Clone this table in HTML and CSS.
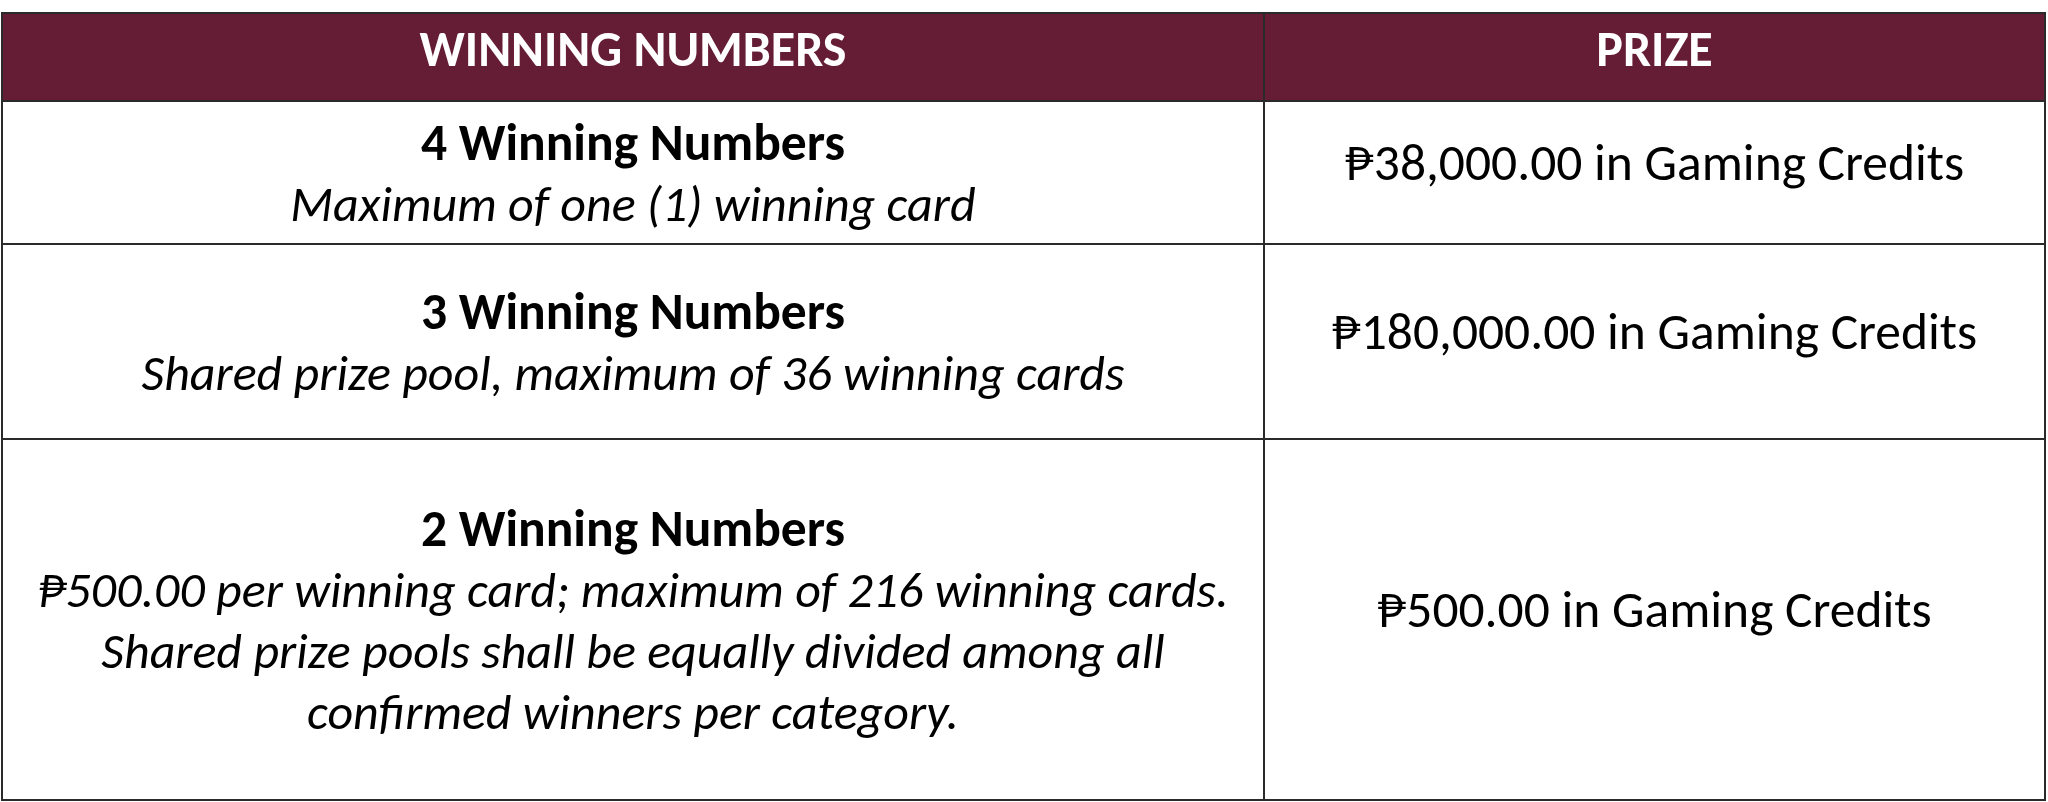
FILE: index.html
```html
<!DOCTYPE html>
<html>
<head>
<meta charset="utf-8">
<link rel="stylesheet" href="styles.css">
</head>
<body>
<table class="prize-table">
  <colgroup>
    <col class="col-numbers">
    <col class="col-prize">
  </colgroup>
  <thead>
    <tr class="head-row">
      <th>WINNING NUMBERS</th>
      <th>PRIZE</th>
    </tr>
  </thead>
  <tbody>
    <tr class="row-1">
      <td class="cat">
        <div class="cat-title">4 Winning Numbers</div>
        <div class="cat-note">Maximum of one (1) winning card</div>
      </td>
      <td class="prize">₱38,000.00 in Gaming Credits</td>
    </tr>
    <tr class="row-2">
      <td class="cat">
        <div class="cat-title">3 Winning Numbers</div>
        <div class="cat-note">Shared prize pool, maximum of 36 winning cards</div>
      </td>
      <td class="prize">₱180,000.00 in Gaming Credits</td>
    </tr>
    <tr class="row-3">
      <td class="cat">
        <div class="cat-title">2 Winning Numbers</div>
        <div class="cat-note">₱500.00 per winning card; maximum of 216 winning cards.<br>Shared prize pools shall be equally divided among all<br>confirmed winners per category.</div>
      </td>
      <td class="prize">₱500.00 in Gaming Credits</td>
    </tr>
  </tbody>
</table>
</body>
</html>
```

FILE: styles.css
```css
html, body {
  margin: 0;
  padding: 0;
  background: #ffffff;
}

body {
  padding: 12px 2px 0 1px;
  font-family: "Carlito", "Lato", "Liberation Sans", sans-serif;
  color: #000000;
}

.prize-table {
  width: 2045px;
  border-collapse: collapse;
  table-layout: fixed;
}

.col-numbers {
  width: 1262px;
}

.prize-table th,
.prize-table td {
  border: 2px solid #2a2a2a;
  text-align: center;
  padding: 0;
}

.head-row th {
  background: #651c35;
  color: #ffffff;
  font-weight: 700;
  font-size: 50px;
  line-height: 58px;
  height: 88px;
  vertical-align: top;
  padding-top: 6px;
  box-sizing: border-box;
}

.cat {
  vertical-align: middle;
  font-size: 50px;
  line-height: 61px;
}

.cat-title {
  font-weight: 700;
  font-size: 51.5px;
}

.cat-note {
  font-style: italic;
}

.prize {
  vertical-align: middle;
  font-size: 51.5px;
  line-height: 61px;
  padding-bottom: 20px !important;
}

.row-1 td { height: 143px; box-sizing: border-box; }
.row-2 td { height: 195px; box-sizing: border-box; }
.row-3 td { height: 361px; box-sizing: border-box; }
```
